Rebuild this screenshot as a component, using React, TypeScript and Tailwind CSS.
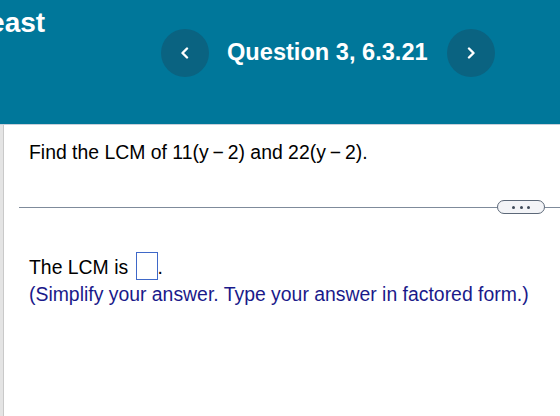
export default function App() {
  const font = { fontFamily: '"Liberation Sans", Arial, sans-serif' };
  return (
    <div className="w-[560px] h-[416px] overflow-hidden bg-white" style={font}>
      {/* header bar */}
      <div className="h-[125px] bg-[#00779a] border-b border-[#c7cfda] flex overflow-hidden">
        <div className="w-[161px] shrink-0 overflow-hidden">
          <div className="ml-[-28px] pt-[9px] text-[28px] leading-[28px] font-bold text-white whitespace-nowrap">Least</div>
        </div>
        <div className="mt-[29px] h-[48px] flex items-center">
          <button className="w-[48px] h-[48px] rounded-full bg-[#0a6381] flex items-center justify-center">
            <svg width="10" height="12" viewBox="0 0 10 12" fill="none"><path d="M7 1.5 L2.5 6 L7 10.5" stroke="white" strokeWidth="2.4" strokeLinecap="round" strokeLinejoin="round" /></svg>
          </button>
          <h1 className="ml-[18px] mr-[19px] text-[23.6px] font-bold text-white whitespace-nowrap">Question 3, 6.3.21</h1>
          <button className="w-[48px] h-[48px] rounded-full bg-[#0a6381] flex items-center justify-center">
            <svg width="10" height="12" viewBox="0 0 10 12" fill="none"><path d="M3 1.5 L7.5 6 L3 10.5" stroke="white" strokeWidth="2.4" strokeLinecap="round" strokeLinejoin="round" /></svg>
          </button>
        </div>
      </div>

      {/* body */}
      <div className="h-[291px] flex">
        <div className="w-[3px] bg-[#e4e4e4]" />
        <div className="w-px bg-[#c9c9c9]" />
        <div className="flex-1 pt-[14px]">
          <p className="pl-[25px] text-[19.4px] leading-[27px] text-black whitespace-nowrap">Find the LCM of 11(y{'\u2009'}−{'\u2009'}2) and 22(y{'\u2009'}−{'\u2009'}2).</p>
          <div className="mt-[34px] ml-[15px] h-[14px] flex items-center">
            <div className="flex-1 h-px bg-[#7f8b9b]" />
            <div className="w-[48px] h-[14px] rounded-full border border-[#5c6878] bg-[#f3f4f7] flex items-center justify-center gap-[4.5px]">
              <span className="w-[3px] h-[3px] rounded-full bg-[#3f4a58]" />
              <span className="w-[3px] h-[3px] rounded-full bg-[#3f4a58]" />
              <span className="w-[3px] h-[3px] rounded-full bg-[#3f4a58]" />
            </div>
            <div className="w-[15px] h-px bg-[#7f8b9b]" />
          </div>
          <div className="mt-[38px] pl-[25px] text-[19.4px] leading-[27px] whitespace-nowrap">
            <p className="text-black">
              The LCM is <span className="inline-block w-[22px] h-[28px] border border-[#3f68c8] align-[-6px] ml-[2px]" />.
            </p>
            <p className="text-[#1a1a8a]">(Simplify your answer. Type your answer in factored form.)</p>
          </div>
        </div>
      </div>
    </div>
  );
}
